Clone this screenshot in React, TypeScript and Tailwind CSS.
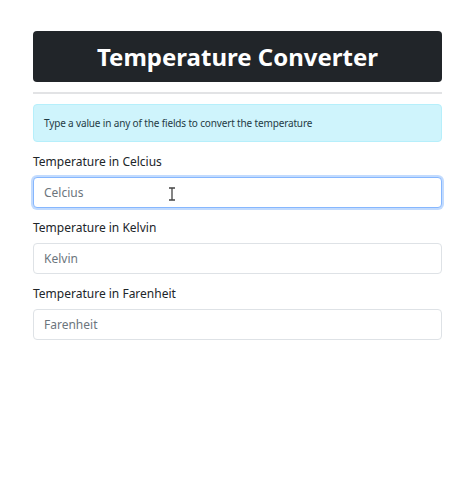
import React from "react";

const font = { fontFamily: '"Noto Sans", "Open Sans", sans-serif' };

function Field({ label, placeholder, focused }: { label: string; placeholder: string; focused?: boolean }) {
  return (
    <div className="flex flex-col">
      <label className="text-[12px] leading-[18px] text-[#212529] mb-[6px]">{label}</label>
      <div className="relative">
        <input
          readOnly
          placeholder={placeholder}
          className={
            "w-full h-[31px] rounded-[4px] bg-white px-[10px] text-[12px] text-[#212529] placeholder:text-[#6c757d] outline-none " +
            (focused
              ? "border border-[#86b7fe] shadow-[0_0_0_2px_rgba(13,110,253,0.25)]"
              : "border border-[#dee2e6]")
          }
        />
        {focused && (
          <svg className="absolute left-[135px] top-[10px]" width="8" height="14" viewBox="0 0 8 14">
            <path d="M1 1h6M1 13h6M4 1v12" stroke="#444" strokeWidth="1.3" fill="none" />
          </svg>
        )}
      </div>
    </div>
  );
}

export default function App() {
  return (
    <div className="w-[474px] h-[480px] bg-white" style={font}>
      <div className="ml-[33px] w-[409px] pt-[31px] flex flex-col">
        <div className="h-[51px] rounded-[4px] bg-[#212529] flex items-center justify-center">
          <h1 className="text-white font-bold text-[24px] leading-none">Temperature Converter</h1>
        </div>
        <div className="mt-[10px] h-[2px] bg-[#e2e3e5]" />
        <div className="mt-[10px] h-[38px] rounded-[4px] bg-[#cff4fc] border border-[#b6effb] flex items-center px-[10px]">
          <span className="text-[10px] tracking-[-0.15px] text-[#1f3b45]">Type a value in any of the fields to convert the temperature</span>
        </div>
        <div className="mt-[11px] flex flex-col gap-[11px]">
          <Field label="Temperature in Celcius" placeholder="Celcius" focused />
          <Field label="Temperature in Kelvin" placeholder="Kelvin" />
          <Field label="Temperature in Farenheit" placeholder="Farenheit" />
        </div>
      </div>
    </div>
  );
}
